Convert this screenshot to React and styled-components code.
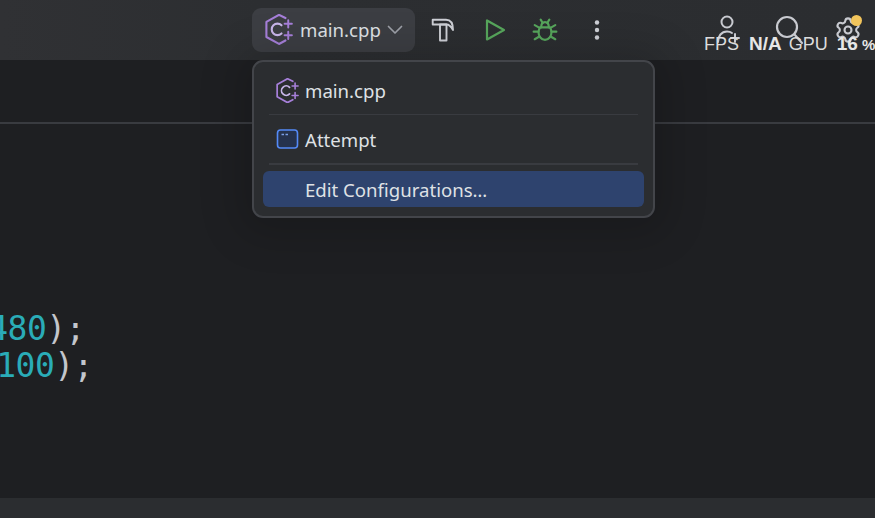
import React from 'react'
import styled, { createGlobalStyle } from 'styled-components'
import { Settings } from 'lucide-react'

const GlobalStyle = createGlobalStyle`
  html, body { margin: 0; padding: 0; background: #1e1f22; }
  #root { height: 518px; overflow: hidden; }
`

const Page = styled.div`
  position: relative;
  width: 875px;
  height: 518px;
  display: flex;
  flex-direction: column;
  overflow: hidden;
  background: #1e1f22;
  font-family: "Noto Sans", "Open Sans", sans-serif;
  color: #dfe1e5;
`

const Toolbar = styled.header`
  height: 60px;
  flex: none;
  display: flex;
  align-items: center;
  padding-left: 252px;
  background: linear-gradient(90deg, #303134 0, #2c2e31 260px, #2b2d30 100%);
`

const RunSelector = styled.div`
  width: 163px;
  height: 44px;
  margin-top: -1px;
  box-sizing: border-box;
  padding-left: 13px;
  display: flex;
  align-items: center;
  border-radius: 9px;
  background: #3c3e43;
  font-size: 18.6px;
  svg { flex: none; }
  span { margin-left: 7px; }
`

const ToolButton = styled.div`
  flex: none;
  width: ${p => p.$w}px;
  margin-left: ${p => p.$gap || 0}px;
  display: flex;
  justify-content: center;
  align-items: center;
`

const TabStrip = styled.div`
  height: 62px;
  flex: none;
  border-bottom: 2px solid #393b40;
`

const Editor = styled.main`
  flex: 1;
  padding-top: 186px;
`

const CodeLine = styled.div`
  width: ${p => p.$end}px;
  height: 37px;
  display: flex;
  justify-content: flex-end;
  white-space: nowrap;
  font-family: "DejaVu Sans Mono", monospace;
  font-size: 33px;
  letter-spacing: -0.5px;
  line-height: 37px;
  color: #c3c6cc;
  b { font-weight: 400; color: #2aacb8; }
`

const StatusBar = styled.footer`
  height: 20px;
  flex: none;
  background: #2b2d30;
`

const Popup = styled.div`
  position: absolute;
  left: 252px;
  top: 60px;
  width: 403px;
  height: 158px;
  box-sizing: border-box;
  padding: 7px 9px 9px;
  border: 2px solid #43454a;
  border-radius: 11px;
  background: #2b2d30;
  box-shadow: 0 4px 40px 14px rgba(0, 0, 0, 0.16);
  font-size: 18.6px;
`

const MenuRow = styled.div`
  height: ${p => p.$h}px;
  box-sizing: border-box;
  padding-left: 13px;
  padding-bottom: ${p => p.$bottom || 0}px;
  display: flex;
  align-items: center;
  gap: 6px;
  svg { flex: none; }
`

const Separator = styled.div`
  height: ${p => p.$h}px;
  margin: 0 6px;
  background: #393b40;
`

const SelectedRow = styled.div`
  height: 36px;
  margin-top: 6px;
  box-sizing: border-box;
  padding: 1px 0 0 42px;
  display: flex;
  align-items: center;
  border-radius: 6px;
  background: #2e436e;
`

const PerfOverlay = styled.div`
  position: absolute;
  left: 704px;
  top: 33px;
  display: flex;
  align-items: baseline;
  white-space: nowrap;
  font-family: "Liberation Sans", Arial, sans-serif;
  font-size: 18px;
  line-height: 21px;
  color: #dcdcdc;
`

const PerfLabel = styled.span`
  margin-left: ${p => p.$gap || 0}px;
`

const PerfValue = styled.b`
  margin-left: ${p => p.$gap}px;
  font-weight: 700;
  font-size: 19px;
  color: #e6e6e6;
  small { margin-left: 4px; font-size: 15px; }
`

const Badge = styled.div`
  position: absolute;
  left: 851px;
  top: 15px;
  width: 11px;
  height: 11px;
  border-radius: 50%;
  background: #f2c55c;
`

function CppIcon({ width }) {
  return (
    <svg width={width} height={width * 1.1} viewBox="2 1 20 22" fill="none" strokeLinecap="round" strokeLinejoin="round">
      <path d="M16.6 3.900 12 1.600 3 6.600v10.800l9 5 4.600-2.500" stroke="#a67fd9" strokeWidth="1.500" />
      <path d="M13.800 9.100a4.100 4.100 0 1 0 0 5.800" stroke="#c9b6ea" strokeWidth="1.500" />
      <path d="M18.600 5.400v5.200M16 8h5.200M18.600 13.600v5.200M16 16.200h5.200" stroke="#a67fd9" strokeWidth="1.400" />
    </svg>
  )
}

function Chevron() {
  return (
    <svg width="16" height="16" viewBox="0 0 16 16" fill="none" style={{ marginLeft: 6 }}>
      <path d="M1.500 4.500 8 11l6.500-6.500" stroke="#9da0a8" strokeWidth="1.700" strokeLinecap="round" strokeLinejoin="round" />
    </svg>
  )
}

function HammerIcon() {
  return (
    <svg width="24" height="26" viewBox="0 0 24 26" fill="none" stroke="#ced0d6" strokeWidth="1.900" strokeLinejoin="round">
      <path d="M1.700 2.800H15c4.500 0 7 3.700 7 10.200-2-3.500-4-5.500-6.500-5.500H1.700z" />
      <path d="M9 7.500h6.500v16H9z" />
    </svg>
  )
}

function PlayIcon() {
  return (
    <svg width="22" height="24" viewBox="0 0 22 24" fill="none">
      <path d="M3 2.500v19L20 12z" stroke="#57a65c" strokeWidth="2.200" strokeLinejoin="round" />
    </svg>
  )
}

function BugIcon() {
  return (
    <svg width="26" height="26" viewBox="0 0 24 24" fill="none" stroke="#57a65c" strokeWidth="2" strokeLinecap="round">
      <path d="M7.500 9.500h9c1 1.400 1.500 3 1.500 4.600 0 3.600-2.500 7-6 7s-6-3.400-6-7c0-1.600.5-3.200 1.500-4.600z" />
      <path d="M8.500 9.500C8.500 6.500 10 4.800 12 4.800s3.500 1.700 3.500 4.700" />
      <path d="M8 2.500l1.800 2.800M16 2.500l-1.800 2.800M1.500 13.500H6M18 13.500h4.500M2.500 7.500 7 10M21.500 7.500 17 10M2.500 20.500 6.800 18M21.500 20.500 17.200 18" />
    </svg>
  )
}

function DotsIcon() {
  return (
    <svg width="6" height="22" viewBox="0 0 6 22" fill="#ced0d6">
      <circle cx="3" cy="3.500" r="2.200" />
      <circle cx="3" cy="11" r="2.200" />
      <circle cx="3" cy="18.500" r="2.200" />
    </svg>
  )
}

function UserIcon() {
  return (
    <svg width="30" height="30" viewBox="0 0 30 30" fill="none" stroke="#c8cad0" strokeWidth="2" strokeLinecap="round">
      <circle cx="13" cy="7" r="5.500" />
      <path d="M4 27c0-6 3.500-10.500 9-10.500 2 0 3.800.6 5 1.500" />
      <path d="M21 19v8M17 23h8" />
    </svg>
  )
}

function SearchIcon() {
  return (
    <svg width="30" height="32" viewBox="0 0 30 32" fill="none" stroke="#c8cad0" strokeWidth="2.200" strokeLinecap="round">
      <circle cx="13" cy="13" r="10" />
      <path d="M20.500 20.500 28 29" />
    </svg>
  )
}

function TerminalIcon() {
  return (
    <svg width="23" height="24" viewBox="0 0 23 24" fill="none">
      <rect x="1.500" y="3" width="20" height="18" rx="3" fill="#25324d" stroke="#548af7" strokeWidth="1.600" />
      <path d="M5.500 7.500h2.500M9.500 7.500h2.500" stroke="#7a9fe8" strokeWidth="1.400" />
    </svg>
  )
}

export default function App() {
  return (
    <Page>
      <GlobalStyle />
      <Toolbar>
        <RunSelector>
          <CppIcon width={28} />
          <span>main.cpp</span>
          <Chevron />
        </RunSelector>
        <ToolButton $w={28} $gap={14}><HammerIcon /></ToolButton>
        <ToolButton $w={24} $gap={26}><PlayIcon /></ToolButton>
        <ToolButton $w={26} $gap={25}><BugIcon /></ToolButton>
        <ToolButton $w={10} $gap={34}><DotsIcon /></ToolButton>
        <ToolButton $w={30} $gap={112}><UserIcon /></ToolButton>
        <ToolButton $w={30} $gap={30}><SearchIcon /></ToolButton>
        <ToolButton $w={30} $gap={29}><Settings size={28} color="#c8cad0" strokeWidth={1.800} /></ToolButton>
      </Toolbar>
      <TabStrip />
      <Editor>
        <CodeLine $end={85}><b>480</b>);</CodeLine>
        <CodeLine $end={93}><b>100</b>);</CodeLine>
      </Editor>
      <StatusBar />
      <Badge />
      <PerfOverlay>
        <PerfLabel>FPS</PerfLabel>
        <PerfValue $gap={10}>N/A</PerfValue>
        <PerfLabel $gap={7}>GPU</PerfLabel>
        <PerfValue $gap={9}>16<small>%</small></PerfValue>
      </PerfOverlay>
      <Popup>
        <MenuRow $h={45} $bottom={2}>
          <CppIcon width={23} />
          <span>main.cpp</span>
        </MenuRow>
        <Separator $h={1} />
        <MenuRow $h={48}>
          <TerminalIcon />
          <span>Attempt</span>
        </MenuRow>
        <Separator $h={2} />
        <SelectedRow>Edit Configurations…</SelectedRow>
      </Popup>
    </Page>
  )
}
